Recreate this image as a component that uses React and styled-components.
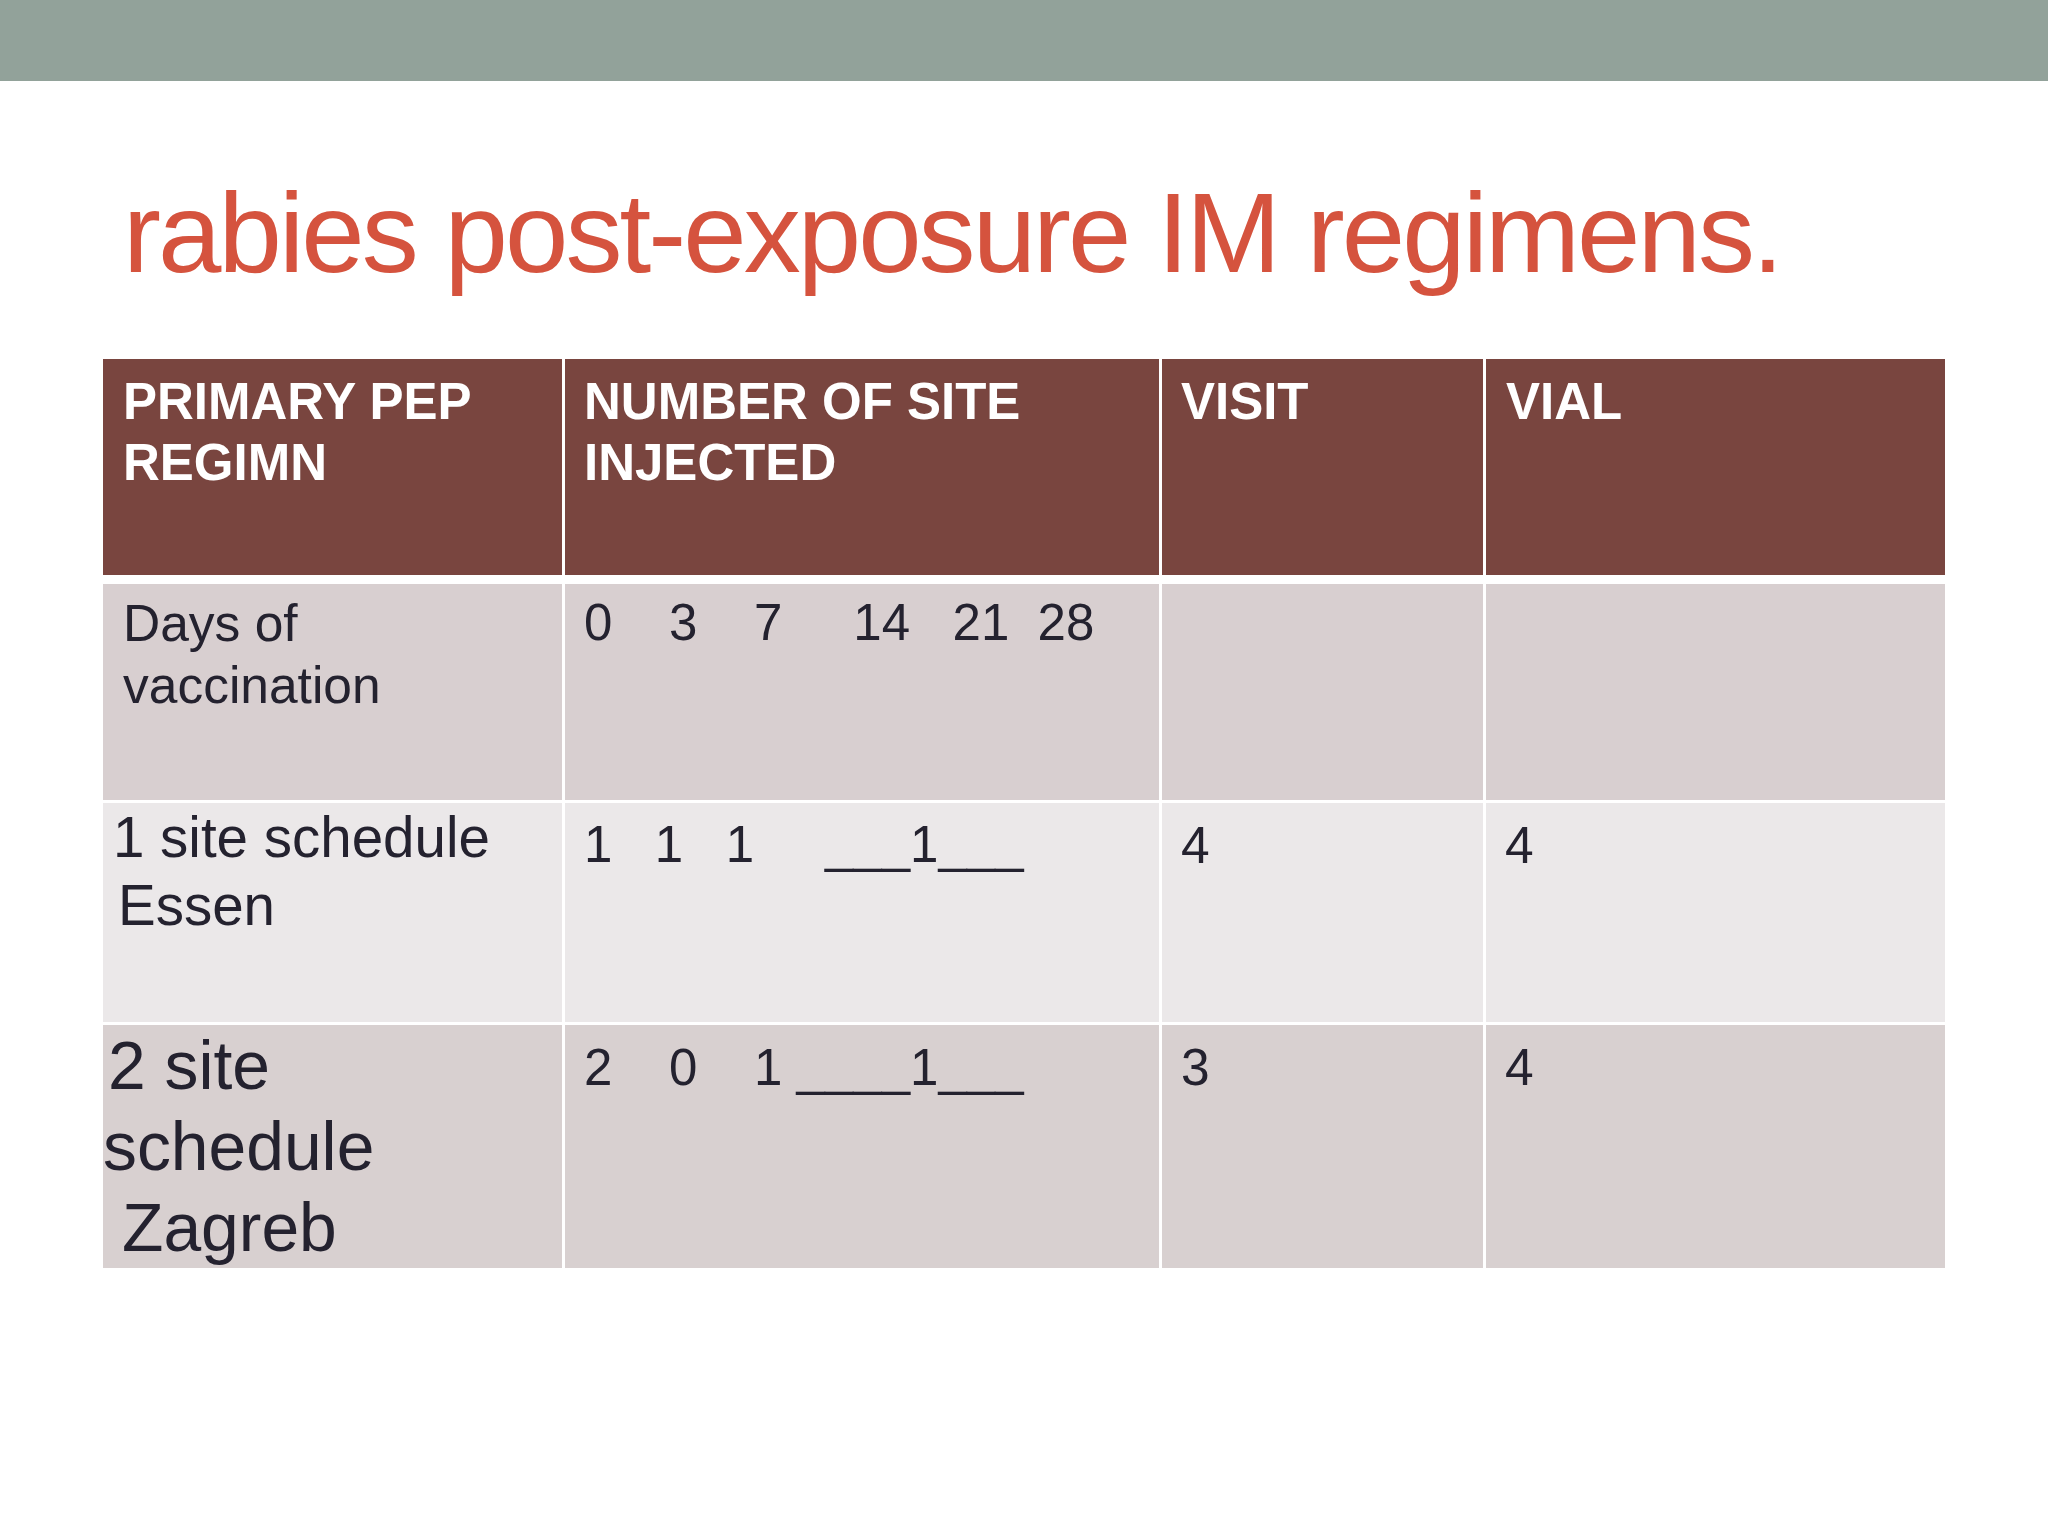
import React from 'react';
import styled, { createGlobalStyle } from 'styled-components';

const GlobalStyle = createGlobalStyle`
  html, body {
    margin: 0;
    padding: 0;
    background: #ffffff;
  }
  body {
    font-family: "Liberation Sans", Arial, sans-serif;
  }
`;

const Slide = styled.div`
  width: 2048px;
  height: 1536px;
  display: flex;
  flex-direction: column;
  background: #ffffff;
  overflow: hidden;
`;

const TopBar = styled.div`
  height: 81px;
  flex-shrink: 0;
  background: #92a29a;
`;

const Title = styled.h1`
  margin: 95px 0 0 0;
  padding-left: 123px;
  font-size: 114px;
  line-height: 114px;
  font-weight: 400;
  letter-spacing: -2.95px;
  color: #d5533e;
  white-space: nowrap;
`;

const Table = styled.div`
  margin: 69px 0 0 103px;
  width: 1842px;
  display: flex;
  flex-direction: column;
  gap: 3px;
`;

const Row = styled.div`
  display: grid;
  grid-template-columns: 459px 594px 321px 459px;
  column-gap: 3px;
  height: ${p => p.$height}px;
`;

const HeaderRow = styled(Row)`
  margin-bottom: 6px;
`;

const Cell = styled.div`
  background: ${p => p.$bg};
  padding-top: ${p => p.$top}px;
  padding-left: ${p => (p.$left === undefined ? 19 : p.$left)}px;
  color: #24222f;
  box-sizing: border-box;
  overflow: visible;
`;

const HeadCell = styled(Cell)`
  background: #79453f;
  color: #ffffff;
  font-weight: 700;
  font-size: 51px;
  line-height: 61px;
`;

const Line = styled.div`
  padding-left: ${p => p.$indent || 0}px;
  font-size: ${p => p.$size || 51.5}px;
  line-height: ${p => p.$lh || 62}px;
  white-space: pre;
`;

const HeadLine = styled.div`
  white-space: pre;
`;

const ROW_DARK = '#d8cfd0';
const ROW_LIGHT = '#ebe8e9';
const ROW_LAST = '#d8d0d0';

export default function App() {
  return (
    <>
      <GlobalStyle />
      <Slide>
        <TopBar />
        <Title>rabies post-exposure IM regimens.</Title>
        <Table>
          <HeaderRow $height={216}>
            <HeadCell $top={12} $left={20}>
              <HeadLine>PRIMARY PEP</HeadLine>
              <HeadLine>REGIMN</HeadLine>
            </HeadCell>
            <HeadCell $top={12} $left={19}>
              <HeadLine>NUMBER OF SITE</HeadLine>
              <HeadLine>INJECTED</HeadLine>
            </HeadCell>
            <HeadCell $top={12} $left={19}>
              <HeadLine>VISIT</HeadLine>
            </HeadCell>
            <HeadCell $top={12} $left={20}>
              <HeadLine>VIAL</HeadLine>
            </HeadCell>
          </HeaderRow>

          <Row $height={216}>
            <Cell $bg={ROW_DARK} $top={7.5} $left={20}>
              <Line>Days of</Line>
              <Line>vaccination</Line>
            </Cell>
            <Cell $bg={ROW_DARK} $top={8}>
              <Line $size={51}>{'0    3    7     14   21  28'}</Line>
            </Cell>
            <Cell $bg={ROW_DARK} $top={7.5} />
            <Cell $bg={ROW_DARK} $top={7.5} />
          </Row>

          <Row $height={219}>
            <Cell $bg={ROW_LIGHT} $top={1} $left={0}>
              <Line $size={56.5} $lh={68} $indent={10}>1 site schedule</Line>
              <Line $size={56.5} $lh={68} $indent={15}>Essen</Line>
            </Cell>
            <Cell $bg={ROW_LIGHT} $top={11}>
              <Line $size={51}>{'1   1   1     ___1___'}</Line>
            </Cell>
            <Cell $bg={ROW_LIGHT} $top={10.5}>
              <Line>4</Line>
            </Cell>
            <Cell $bg={ROW_LIGHT} $top={10.5}>
              <Line>4</Line>
            </Cell>
          </Row>

          <Row $height={242}>
            <Cell $bg={ROW_LAST} $top={0} $left={0}>
              <Line $size={67.8} $lh={81} $indent={5}>2 site</Line>
              <Line $size={67.8} $lh={81} $indent={0}>schedule</Line>
              <Line $size={67.8} $lh={81} $indent={19}>Zagreb</Line>
            </Cell>
            <Cell $bg={ROW_LAST} $top={11.5}>
              <Line $size={51}>{'2    0    1 ____1___'}</Line>
            </Cell>
            <Cell $bg={ROW_LAST} $top={11}>
              <Line>3</Line>
            </Cell>
            <Cell $bg={ROW_LAST} $top={11}>
              <Line>4</Line>
            </Cell>
          </Row>
        </Table>
      </Slide>
    </>
  );
}
